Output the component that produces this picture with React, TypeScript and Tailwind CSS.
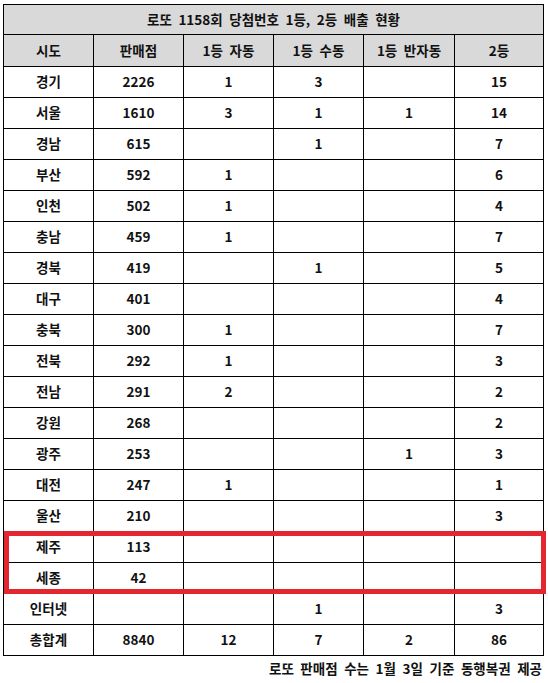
const ROWS: string[][] = [
  ["경기", "2226", "1", "3", "", "15"],
  ["서울", "1610", "3", "1", "1", "14"],
  ["경남", "615", "", "1", "", "7"],
  ["부산", "592", "1", "", "", "6"],
  ["인천", "502", "1", "", "", "4"],
  ["충남", "459", "1", "", "", "7"],
  ["경북", "419", "", "1", "", "5"],
  ["대구", "401", "", "", "", "4"],
  ["충북", "300", "1", "", "", "7"],
  ["전북", "292", "1", "", "", "3"],
  ["전남", "291", "2", "", "", "2"],
  ["강원", "268", "", "", "", "2"],
  ["광주", "253", "", "", "1", "3"],
  ["대전", "247", "1", "", "", "1"],
  ["울산", "210", "", "", "", "3"],
  ["제주", "113", "", "", "", ""],
  ["세종", "42", "", "", "", ""],
  ["인터넷", "", "", "1", "", "3"],
  ["총합계", "8840", "12", "7", "2", "86"],
];

const HEAD = ["시도", "판매점", "1등 자동", "1등 수동", "1등 반자동", "2등"];

const cell = "flex items-center justify-center border-r border-b border-black";

export default function App() {
  return (
    <div className="w-[548px] h-[683px] bg-white text-[#111] font-bold text-[13.5px] leading-none [word-spacing:3.5px]" style={{ fontFamily: '"Noto Sans CJK KR", "Noto Sans", sans-serif' }}>
      <div className="pt-[4px] pl-[3px]">
        <div className="relative w-[541px] border-l border-t border-black">
          <div className="grid grid-cols-[90px_90px_90px_90px_91px_89px]">
            <div className={`${cell} col-span-6 h-[30px] bg-[#d9d9d9]`}>로또 1158회 당첨번호 1등, 2등 배출 현황</div>
            {HEAD.map((h) => (
              <div key={h} className={`${cell} h-[32px] bg-[#d9d9d9]`}>{h}</div>
            ))}
            {ROWS.map((r) =>
              r.map((v, i) => (
                <div key={r[0] + i} className={`${cell} h-[31px]`}>{v}</div>
              ))
            )}
          </div>
          {/* highlight around 제주 / 세종 */}
          <div className="absolute left-0 top-[526px] w-[542px] h-[63px] border-[5px] border-[#e3262f]" />
        </div>
        <div className="w-[540px] text-right mt-[6px] pr-[1px]">로또 판매점 수는 1월 3일 기준 동행복권 제공</div>
      </div>
    </div>
  );
}
